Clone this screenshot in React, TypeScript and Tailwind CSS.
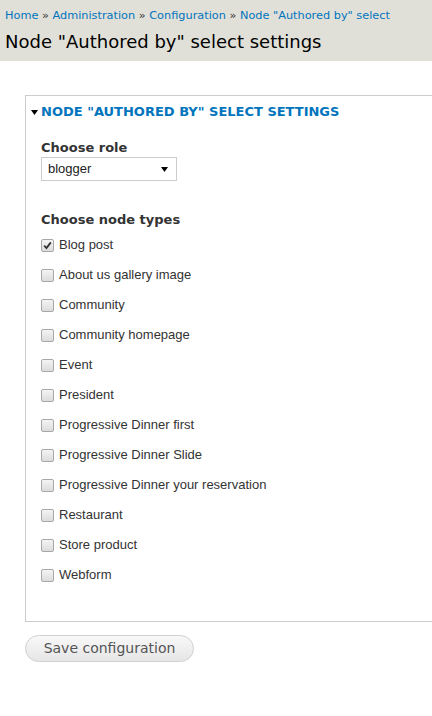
const nodeTypes = [
  { label: 'Blog post', checked: true },
  { label: 'About us gallery image' },
  { label: 'Community' },
  { label: 'Community homepage' },
  { label: 'Event' },
  { label: 'President' },
  { label: 'Progressive Dinner first' },
  { label: 'Progressive Dinner Slide' },
  { label: 'Progressive Dinner your reservation' },
  { label: 'Restaurant' },
  { label: 'Store product' },
  { label: 'Webform' },
];

function Checkbox({ checked }: { checked?: boolean }) {
  return (
    <span className="w-[13px] h-[13px] rounded-[2px] border border-[#a8a8a8] bg-gradient-to-b from-[#f4f4f4] to-[#dcdcdc] flex items-center justify-center shrink-0">
      {checked && (
        <svg width="9" height="9" viewBox="0 0 9 9">
          <path d="M1.2 4.6 L3.5 7 L7.8 1.4" fill="none" stroke="#333" strokeWidth="1.8" />
        </svg>
      )}
    </span>
  );
}

export default function App() {
  const crumbs = ['Home', 'Administration', 'Configuration', 'Node "Authored by" select'];
  return (
    <div className="w-[432px] h-[716px] overflow-hidden bg-white font-['DejaVu_Sans',sans-serif]">
      <div className="bg-[#e0e0d8] h-[61px] px-[5px] pt-[8px]">
        <div className="text-[11.3px] leading-[16px] text-[#0074bd] whitespace-nowrap">
          {crumbs.map((c, i) => (
            <span key={c}>
              {i > 0 && <span className="text-[#333]"> » </span>}
              {c}
            </span>
          ))}
        </div>
        <h1 className="text-[18px] leading-[26px] text-[#000] mt-[5px] whitespace-nowrap">
          Node "Authored by" select settings
        </h1>
      </div>

      <div className="pl-[25px] pt-[34px]">
        <div className="w-[440px] h-[527px] border border-[#ccc] pl-[15px] pt-[7px]">
          <div className="flex items-center text-[13px] font-bold uppercase text-[#0074bd] leading-[18px] -ml-[10px]">
            <svg width="7" height="5" viewBox="0 0 7 5" className="mr-[3px]">
              <path d="M0 0 H7 L3.5 5 Z" fill="#000" />
            </svg>
            Node "Authored by" select settings
          </div>

          <div className="mt-[18px] text-[13px] font-bold text-[#333] leading-[17px]">Choose role</div>
          <div className="mt-[1px] w-[136px] h-[24px] border border-[#ccc] bg-white flex items-center justify-between pl-[6px] pr-[8px] font-['Liberation_Sans',sans-serif] text-[13px] text-[#222]">
            blogger
            <svg width="7" height="5" viewBox="0 0 7 5">
              <path d="M0 0 H7 L3.5 5 Z" fill="#000" />
            </svg>
          </div>

          <div className="mt-[30px] text-[13px] font-bold text-[#333] leading-[17px]">Choose node types</div>
          <div className="mt-[7px] flex flex-col">
            {nodeTypes.map((t) => (
              <div key={t.label} className="h-[30px] flex items-start pt-[2px] gap-[5px]">
                <span className="pt-[2px]"><Checkbox checked={t.checked} /></span>
                <span className="font-['Liberation_Sans',sans-serif] text-[13px] leading-[16px] text-[#333]">{t.label}</span>
              </div>
            ))}
          </div>
        </div>

        <button className="mt-[13px] w-[169px] h-[27px] rounded-full border border-[#d0d0d0] bg-gradient-to-b from-[#f8f8f8] to-[#e6e6e6] text-[14px] text-[#555] flex items-center justify-center">
          Save configuration
        </button>
      </div>
    </div>
  );
}
